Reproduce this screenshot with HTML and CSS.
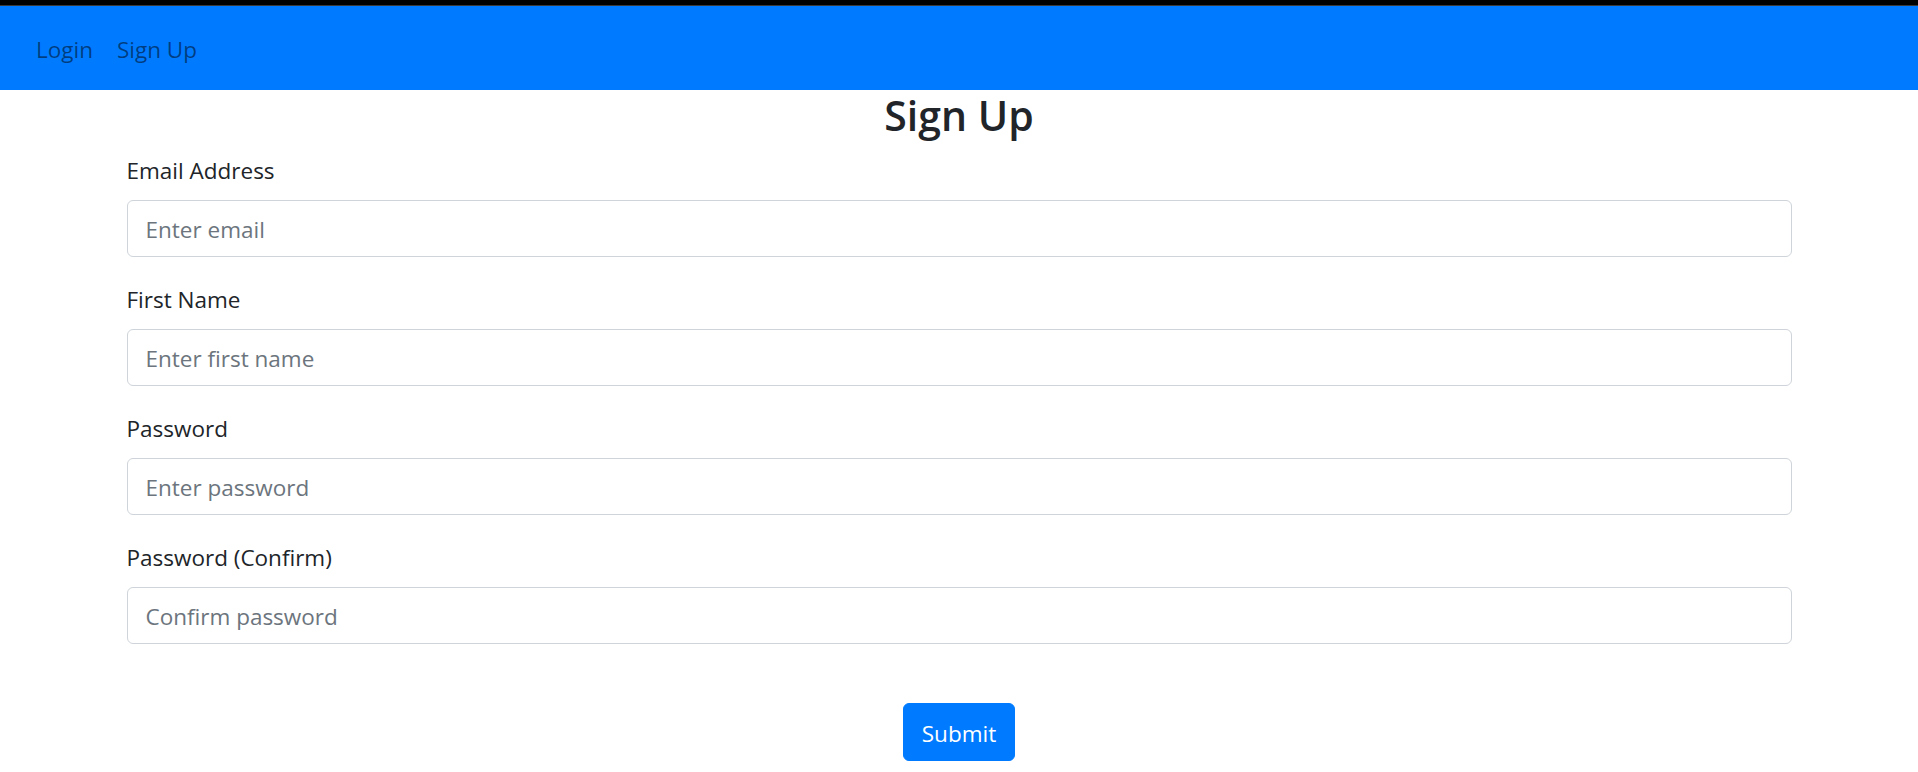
FILE: index.html
```html
<!DOCTYPE html>
<html lang="en">
<head>
<meta charset="utf-8">
<title>Sign Up</title>
<link rel="stylesheet" href="styles.css">
</head>
<body>
<div class="topstrip"></div>
<nav class="navbar">
  <a class="nav-link" href="#">Login</a>
  <a class="nav-link" href="#">Sign Up</a>
</nav>
<div class="container">
  <h3 class="title">Sign Up</h3>
  <form class="form">
    <div class="form-group">
      <label class="label" for="email">Email Address</label>
      <input class="input" type="email" id="email" placeholder="Enter email">
    </div>
    <div class="form-group">
      <label class="label" for="firstName">First Name</label>
      <input class="input" type="text" id="firstName" placeholder="Enter first name">
    </div>
    <div class="form-group">
      <label class="label" for="password1">Password</label>
      <input class="input" type="password" id="password1" placeholder="Enter password">
    </div>
    <div class="form-group">
      <label class="label" for="password2">Password (Confirm)</label>
      <input class="input" type="password" id="password2" placeholder="Confirm password">
    </div>
    <div class="actions">
      <button class="btn" type="submit">Submit</button>
    </div>
  </form>
</div>
</body>
</html>
```
FILE: styles.css
```css
* { box-sizing: border-box; }
html, body {
  margin: 0;
  padding: 0;
}
body {
  font-family: "Open Sans", "Noto Sans", "Liberation Sans", sans-serif;
  font-size: 22.5px;
  line-height: 36px;
  color: #212529;
  background: #fff;
}
.topstrip {
  height: 6px;
  background: #000;
  border-bottom: 1px solid #3a3a3a;
}
.navbar {
  display: flex;
  align-items: center;
  height: 84px;
  padding: 12px 24px;
  background: #007bff;
}
.nav-link {
  padding: 14px 12px 10px;
  color: rgba(0, 0, 0, 0.5);
  text-decoration: none;
  font-size: 22.5px;
  line-height: 36px;
}
.container {
  max-width: 1710px;
  margin: 0 auto;
  padding: 0 22.5px;
}
.title {
  margin: 0 0 12px;
  text-align: center;
  font-size: 41px;
  line-height: 50px;
  font-weight: 600;
}
.form-group {
  margin-bottom: 24px;
}
.label {
  display: inline-block;
  margin-bottom: 11px;
  padding-top: 1px;
}
.input {
  display: block;
  width: 100%;
  height: 57px;
  padding: 10px 18px 8px;
  border: 1px solid #ced4da;
  border-radius: 6px;
  font-family: inherit;
  font-size: 22.5px;
  line-height: 36px;
  color: #495057;
  background: #fff;
}
.input::placeholder {
  color: #6c757d;
  opacity: 1;
}
.actions {
  display: flex;
  justify-content: center;
  padding-top: 35px;
}
.btn {
  height: 58px;
  padding: 11px 18px 7px;
  border: 1px solid #007bff;
  border-radius: 6px;
  background: #007bff;
  color: #fff;
  font-family: inherit;
  font-size: 22.5px;
  line-height: 36px;
}
```
